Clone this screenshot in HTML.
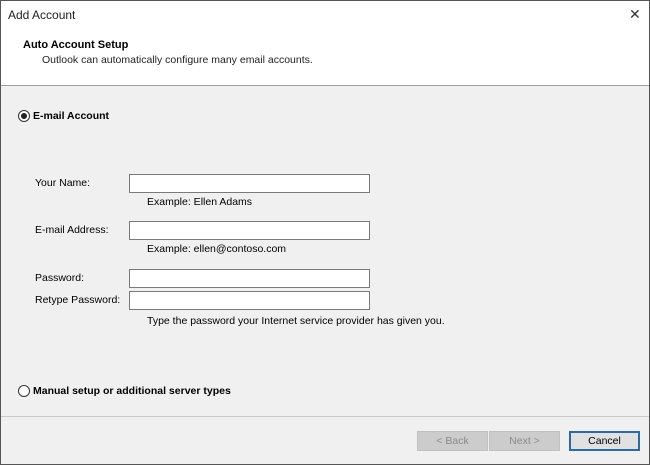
<!DOCTYPE html><html><head><style>
body{margin:0;width:650px;height:465px;overflow:hidden;font-family:"Liberation Sans",sans-serif;font-size:10.5px;color:#000}
.win{position:absolute;left:0;top:0;width:648px;height:463px;border:1px solid #555;background:#f0f0f0}
.hdr{position:absolute;left:0;top:0;width:648px;height:84px;background:#fff;border-bottom:1px solid #a0a0a0}
.a{position:absolute;white-space:nowrap}
.in{position:absolute;left:128px;width:239px;height:17px;background:#fff;border:1px solid #7a7a7a}
.rad{position:absolute;width:10px;height:10px;border:1px solid #333;border-radius:50%;background:#fff}
.btn{position:absolute;top:430px;width:69px;height:18px;text-align:center;line-height:18px;background:#ccc;border:1px solid #c0c0c0;color:#8a8a8a}
</style></head><body><div class="win">
<div class="hdr"></div>
<div class="a" style="left:7px;top:7px;font-size:12px;color:#222">Add Account</div>
<div class="a" style="left:628px;top:5px;font-size:14px;color:#333">✕</div>
<div class="a" style="left:22px;top:38px;font-weight:bold;font-size:11px">Auto Account Setup</div>
<div class="a" style="left:41px;top:53px;color:#222">Outlook can automatically configure many email accounts.</div>
<div class="rad" style="left:17px;top:109px"><div style="position:absolute;left:2px;top:2px;width:6px;height:6px;border-radius:50%;background:#222"></div></div>
<div class="a" style="left:32px;top:109px;font-weight:bold">E-mail Account</div>
<div class="a" style="left:34px;top:176px">Your Name:</div>
<div class="in" style="top:173px"></div>
<div class="a" style="left:146px;top:195px">Example: Ellen Adams</div>
<div class="a" style="left:34px;top:223px">E-mail Address:</div>
<div class="in" style="top:220px"></div>
<div class="a" style="left:146px;top:242px">Example: ellen@contoso.com</div>
<div class="a" style="left:34px;top:271px">Password:</div>
<div class="in" style="top:268px"></div>
<div class="a" style="left:34px;top:293px">Retype Password:</div>
<div class="in" style="top:290px"></div>
<div class="a" style="left:146px;top:314px">Type the password your Internet service provider has given you.</div>
<div class="rad" style="left:17px;top:384px"></div>
<div class="a" style="left:32px;top:384px;font-weight:bold">Manual setup or additional server types</div>
<div style="position:absolute;left:0;top:415px;width:648px;border-top:1px solid #c8c8c8"></div>
<div class="btn" style="left:416px">&lt; Back</div>
<div class="btn" style="left:488px">Next &gt;</div>
<div class="btn" style="left:568px;background:#e1e1e1;border:2px solid #2b6aa3;height:16px;line-height:16px;width:67px;color:#000">Cancel</div>
</div></body></html>
